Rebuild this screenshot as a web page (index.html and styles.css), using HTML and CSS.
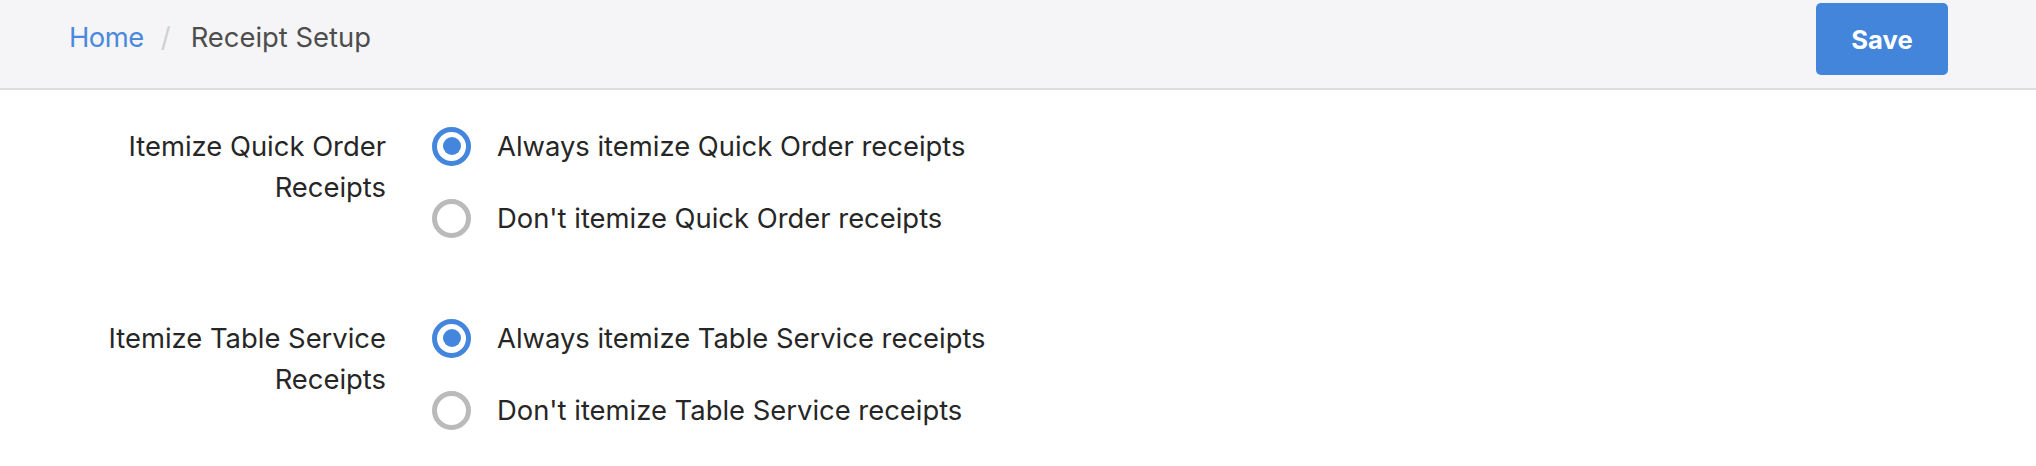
FILE: index.html
```html
<!DOCTYPE html>
<html lang="en">
<head>
<meta charset="utf-8">
<title>Receipt Setup</title>
<link rel="stylesheet" href="styles.css">
</head>
<body>
<header class="topbar">
  <nav class="breadcrumb">
    <a class="crumb-link" href="#">Home</a>
    <span class="crumb-sep">/</span>
    <span class="crumb-current">Receipt Setup</span>
  </nav>
  <button class="btn-save" type="button">Save</button>
</header>
<main class="form">
  <section class="setting">
    <div class="setting-label">Itemize Quick Order Receipts</div>
    <div class="options">
      <label class="option">
        <span class="radio radio-checked"></span>
        <span class="option-text">Always itemize Quick Order receipts</span>
      </label>
      <label class="option">
        <span class="radio"></span>
        <span class="option-text">Don't itemize Quick Order receipts</span>
      </label>
    </div>
  </section>
  <section class="setting">
    <div class="setting-label">Itemize Table Service Receipts</div>
    <div class="options">
      <label class="option">
        <span class="radio radio-checked"></span>
        <span class="option-text">Always itemize Table Service receipts</span>
      </label>
      <label class="option">
        <span class="radio"></span>
        <span class="option-text">Don't itemize Table Service receipts</span>
      </label>
    </div>
  </section>
</main>
</body>
</html>
```
FILE: styles.css
```css
* { box-sizing: border-box; }

html, body {
  margin: 0;
  padding: 0;
  background: #ffffff;
}

body {
  font-family: Inter, Roboto, "Liberation Sans", Arial, sans-serif;
  font-size: 27.4px;
  color: #262626;
}

.topbar {
  height: 90px;
  background: #f5f5f7;
  border-bottom: 2px solid #dedee2;
  display: flex;
  align-items: center;
  justify-content: space-between;
  padding: 0 88px 10px 69px;
}

.breadcrumb {
  display: flex;
  align-items: center;
  line-height: 40px;
  margin-top: -4px;
}

.crumb-link {
  color: #4a89dc;
  text-decoration: none;
  letter-spacing: -0.5px;
}

.crumb-sep {
  color: #cfcfd2;
  margin: 0 20px 0 17px;
}

.crumb-current {
  color: #4d4d4d;
}

.btn-save {
  width: 132px;
  height: 72px;
  border: none;
  border-radius: 5px;
  background: #4285db;
  color: #ffffff;
  font-family: Inter, Roboto, "Liberation Sans", Arial, sans-serif;
  font-size: 25.6px;
  font-weight: 700;
  padding: 0;
}

.form {
  padding: 36px 0 0 86px;
  display: flex;
  flex-direction: column;
  gap: 80px;
}

.setting {
  display: grid;
  grid-template-columns: 300px 1fr;
  column-gap: 46px;
  align-items: start;
}

.setting-label {
  text-align: right;
  line-height: 40.5px;
}

.options {
  display: flex;
  flex-direction: column;
  gap: 32px;
}

.option {
  display: flex;
  align-items: center;
  gap: 26px;
  height: 40px;
  line-height: 40px;
}

.radio {
  width: 39px;
  height: 39px;
  border-radius: 50%;
  border: 5px solid #bababa;
  background: #ffffff;
  display: flex;
  align-items: center;
  justify-content: center;
  flex: none;
}

.radio-checked {
  border-color: #4486dd;
}

.radio-checked::after {
  content: "";
  width: 18px;
  height: 18px;
  border-radius: 50%;
  background: #4486dd;
}
```
